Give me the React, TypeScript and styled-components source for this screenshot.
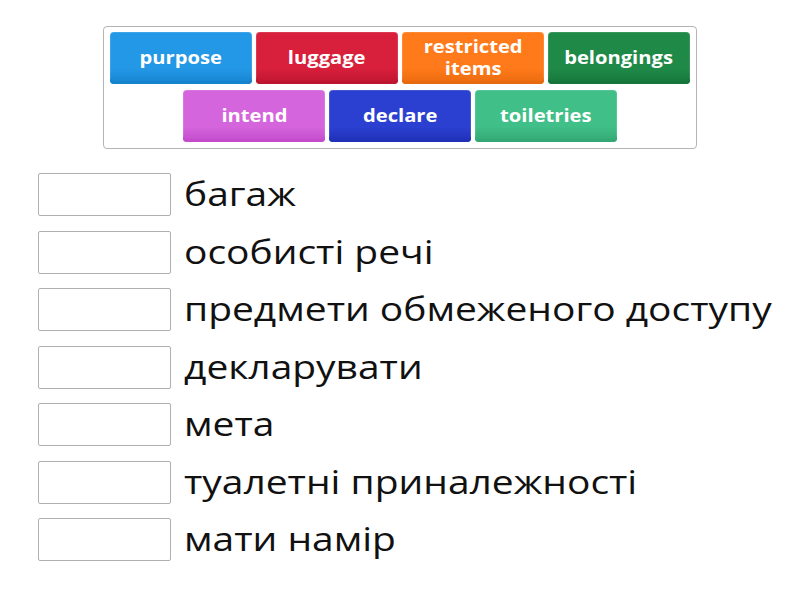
import React from "react";
import styled, { createGlobalStyle } from "styled-components";

const Global = createGlobalStyle`
  html, body { margin: 0; padding: 0; background: #fff; }
  body { font-family: "Open Sans", "Noto Sans", sans-serif; }
`;

const Page = styled.div`
  width: 800px;
  height: 600px;
  box-sizing: border-box;
  padding-top: 26px;
  display: flex;
  flex-direction: column;
  align-items: center;
`;

const Bank = styled.div`
  width: 594px;
  box-sizing: border-box;
  border: 1px solid #b4b4b4;
  border-radius: 4px;
  padding: 5px 6px 6px;
  display: flex;
  flex-wrap: wrap;
  justify-content: center;
  gap: 6px 4px;
`;

const Tile = styled.div<{ $c: string; $d: string }>`
  width: 142px;
  height: 52px;
  box-sizing: border-box;
  border-radius: 4px;
  background: linear-gradient(to bottom, ${(p) => p.$c} 0%, ${(p) => p.$c} 70%, ${(p) => p.$d} 100%);
  box-shadow: inset 0 -3px 0 ${(p) => p.$d}, inset 0 0 0 1px rgba(255,255,255,0.12);
  color: #fff;
  font-weight: 700;
  font-size: 18px;
  line-height: 22px;
  display: flex;
  align-items: center;
  justify-content: center;
  text-align: center;
  padding-bottom: 3px;
`;

const TileText = styled.span`
  display: inline-block;
  transform: scaleX(1.12);
`;

const List = styled.div`
  width: 800px;
  box-sizing: border-box;
  padding: 24px 0 0 38px;
  display: flex;
  flex-direction: column;
  gap: 14.5px;
`;

const Row = styled.div`
  display: flex;
  align-items: center;
  height: 43px;
`;

const Slot = styled.div`
  width: 133px;
  height: 43px;
  box-sizing: border-box;
  border: 1px solid #b0b0b0;
  border-radius: 2px;
  background: #fff;
  flex: none;
`;

const Label = styled.div`
  margin-left: 13px;
  font-size: 33px;
  color: #111;
  white-space: nowrap;
  line-height: 43px;
  margin-top: -2px;
  transform: scaleX(1.18);
  transform-origin: left center;
`;

const tiles = [
  { t: "purpose", c: "#2398e6", d: "#1683cf" },
  { t: "luggage", c: "#d81f3b", d: "#bd1530" },
  { t: "restricted\nitems", c: "#ff7a1a", d: "#e86a0e" },
  { t: "belongings", c: "#1f8a48", d: "#16753b" },
  { t: "intend", c: "#d565dd", d: "#c34bcc" },
  { t: "declare", c: "#2b3fd1", d: "#2031b8" },
  { t: "toiletries", c: "#40bf88", d: "#33a874" },
];

const rows = [
  "багаж",
  "особисті речі",
  "предмети обмеженого доступу",
  "декларувати",
  "мета",
  "туалетні приналежності",
  "мати намір",
];

export default function App() {
  return (
    <>
      <Global />
      <Page>
        <Bank>
          {tiles.map((x) => (
            <Tile key={x.t} $c={x.c} $d={x.d}>
              <TileText>
                {x.t.split("\n").map((l, i) => (
                  <React.Fragment key={i}>
                    {i > 0 && <br />}
                    {l}
                  </React.Fragment>
                ))}
              </TileText>
            </Tile>
          ))}
        </Bank>
        <List>
          {rows.map((r) => (
            <Row key={r}>
              <Slot />
              <Label>{r}</Label>
            </Row>
          ))}
        </List>
      </Page>
    </>
  );
}
